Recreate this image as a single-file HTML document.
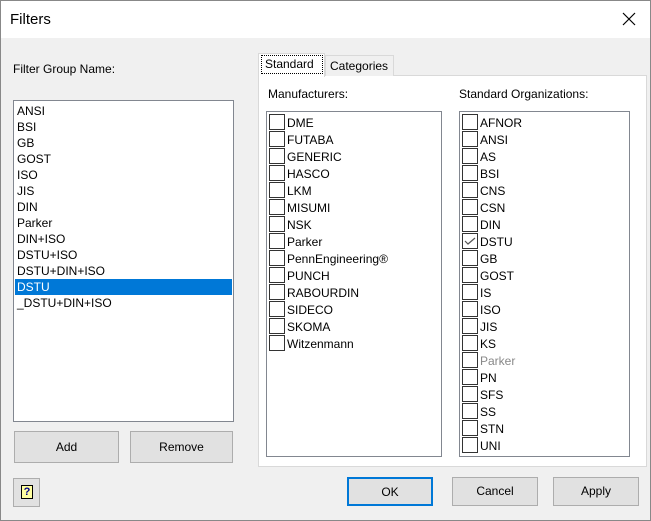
<!DOCTYPE html>
<html><head><style>
*{margin:0;padding:0;box-sizing:border-box}
body{width:651px;height:521px;background:#f0f0f0;font-family:"Liberation Sans",sans-serif;font-size:12px;color:#000;position:relative;overflow:hidden}
.a{position:absolute}
.win{left:0;top:0;width:651px;height:521px;border:1px solid #888}
.title{left:1px;top:1px;width:649px;height:37px;background:#fff}
.lb{background:#fff;border:1px solid #828790}
.it{position:absolute;left:3px;height:16px;line-height:16px;white-space:nowrap}
.btn{background:#e1e1e1;border:1px solid #adadad;text-align:center}
.cb{position:absolute;width:16px;height:16px;border:1px solid #333;background:#fff}
.ct{position:absolute;height:17px;line-height:17px;white-space:nowrap}
</style></head><body>
<div class="a win"></div>
<div class="a title"></div>
<div class="a" style="left:10px;top:11px;font-size:15px">Filters</div>
<svg class="a" style="left:622px;top:12px" width="14" height="14"><path d="M1 1L13 13M13 1L1 13" stroke="#000" stroke-width="1.2"/></svg>

<div class="a" style="left:13px;top:62px">Filter Group Name:</div>
<div class="a lb" style="left:13px;top:100px;width:221px;height:322px">
<div class="it" style="top:2px">ANSI</div>
<div class="it" style="top:18px">BSI</div>
<div class="it" style="top:34px">GB</div>
<div class="it" style="top:50px">GOST</div>
<div class="it" style="top:66px">ISO</div>
<div class="it" style="top:82px">JIS</div>
<div class="it" style="top:98px">DIN</div>
<div class="it" style="top:114px">Parker</div>
<div class="it" style="top:130px">DIN+ISO</div>
<div class="it" style="top:146px">DSTU+ISO</div>
<div class="it" style="top:162px">DSTU+DIN+ISO</div>
<div class="it" style="top:178px;left:1px;width:217px;padding-left:2px;background:#0078d7;color:#fff">DSTU</div>
<div class="it" style="top:194px">_DSTU+DIN+ISO</div>
</div>
<div class="a btn" style="left:14px;top:431px;width:105px;height:32px;line-height:30px">Add</div>
<div class="a btn" style="left:130px;top:431px;width:103px;height:32px;line-height:30px">Remove</div>
<div class="a btn" style="left:13px;top:478px;width:27px;height:29px"></div>
<div class="a" style="left:21px;top:485px;width:12px;height:14px;background:#ffffa0;border:1px solid #000;font-size:11px;font-weight:bold;color:#00008b;line-height:12px;text-align:center">?</div>

<div class="a" style="left:258px;top:75px;width:389px;height:392px;background:#fff;border:1px solid #d9d9d9"></div>
<div class="a" style="left:325px;top:55px;width:69px;height:21px;background:#f0f0f0;border:1px solid #d9d9d9;border-bottom:none;line-height:20px;padding-left:4px">Categories</div>
<div class="a" style="left:258px;top:53px;width:67px;height:24px;background:#fff;border:1px solid #d9d9d9;border-bottom:none"></div>
<div class="a" style="left:261px;top:55px;width:62px;height:19px;border:1px dotted #000;line-height:17px;padding-left:3px">Standard</div>

<div class="a" style="left:268px;top:87px">Manufacturers:</div>
<div class="a" style="left:459px;top:87px">Standard Organizations:</div>
<div class="a lb" style="left:266px;top:111px;width:176px;height:346px" id="m"></div>
<div class="a lb" style="left:459px;top:111px;width:171px;height:346px" id="s"></div>

<div class="a btn" style="left:347px;top:477px;width:86px;height:29px;line-height:27px;border:2px solid #0078d7">OK</div>
<div class="a btn" style="left:452px;top:477px;width:86px;height:29px;line-height:27px">Cancel</div>
<div class="a btn" style="left:553px;top:477px;width:86px;height:29px;line-height:27px">Apply</div>
<script>
function fill(id,items,x){var e=document.getElementById(id),h='';items.forEach(function(t,i){var y=2+17*i;h+='<div class="cb" style="left:2px;top:'+y+'px"></div>';var c=t=='Parker'&&id=='s'?'color:#888':'';h+='<div class="ct" style="left:20px;top:'+(y+1)+'px;'+c+'">'+t+'</div>';if(t=='DSTU'&&id=='s')h+='<svg style="position:absolute;left:4px;top:'+(y+4)+'px" width="12" height="9"><path d="M1 4L4 7L11 1" stroke="#555" fill="none" stroke-width="1.2"/></svg>';});e.innerHTML=h;}
fill('m',['DME','FUTABA','GENERIC','HASCO','LKM','MISUMI','NSK','Parker','PennEngineering®','PUNCH','RABOURDIN','SIDECO','SKOMA','Witzenmann']);
fill('s',['AFNOR','ANSI','AS','BSI','CNS','CSN','DIN','DSTU','GB','GOST','IS','ISO','JIS','KS','Parker','PN','SFS','SS','STN','UNI']);
</script>
</body></html>
